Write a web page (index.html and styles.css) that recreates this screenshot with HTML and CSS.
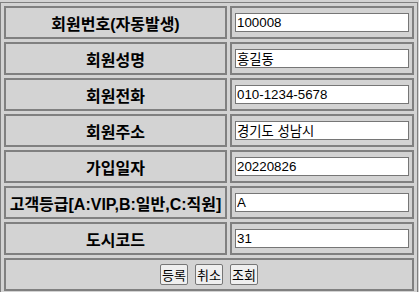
FILE: index.html
```html
<!DOCTYPE html>
<html lang="ko">
<head>
    <meta charset="UTF-8">
    <meta name="viewport" content="width=device-width, initial-scale=1.0">
    <title>회원등록</title>
    <link rel="stylesheet" href="styles.css">
</head>
<body>
    <form class="member-form">
        <table class="member-table">
            <tr>
                <th>회원번호(자동발생)</th>
                <td><input type="text" value="100008"></td>
            </tr>
            <tr>
                <th>회원성명</th>
                <td><input type="text" value="홍길동"></td>
            </tr>
            <tr>
                <th>회원전화</th>
                <td><input type="text" value="010-1234-5678"></td>
            </tr>
            <tr>
                <th>회원주소</th>
                <td><input type="text" value="경기도 성남시"></td>
            </tr>
            <tr>
                <th>가입일자</th>
                <td><input type="text" value="20220826"></td>
            </tr>
            <tr>
                <th>고객등급[A:VIP,B:일반,C:직원]</th>
                <td><input type="text" value="A"></td>
            </tr>
            <tr>
                <th>도시코드</th>
                <td><input type="text" value="31"></td>
            </tr>
            <tr>
                <td colspan="2" class="actions">
                    <div class="buttons">
                        <button type="submit">등록</button>
                        <button type="reset">취소</button>
                        <button type="button">조회</button>
                    </div>
                </td>
            </tr>
        </table>
    </form>
</body>
</html>
```

FILE: styles.css
```css
* {
    box-sizing: border-box;
}

body {
    margin: 0;
    background-color: #d3d3d3;
    font-family: 'Liberation Sans', 'Noto Sans CJK KR', sans-serif;
    color: #000;
}

.member-table {
    width: 418px;
    margin-top: 2px;
    border: 1px solid #808080;
    border-spacing: 3px;
    background-color: #d3d3d3;
}

.member-table th,
.member-table td {
    height: 33px;
    border: 2px solid #808080;
    padding: 0 3px;
}

.member-table th {
    width: 226px;
    font-size: 16px;
    font-weight: bold;
    text-align: center;
    white-space: nowrap;
}

.member-table input {
    display: block;
    width: 174px;
    height: 19px;
    margin: 0 auto;
    padding: 0 1px;
    border: 2px inset #767676;
    border-width: 1px;
    border-style: solid;
    background: #fff;
    font-family: 'Liberation Sans', 'Noto Sans CJK KR', sans-serif;
    font-size: 13.33px;
}

.buttons {
    display: flex;
    justify-content: center;
    gap: 7px;
}

.buttons button {
    height: 21px;
    padding: 0 1px;
    border: 1px solid #767676;
    border-radius: 2px;
    background-color: #efefef;
    font-family: 'Noto Sans CJK KR', sans-serif;
    font-size: 13px;
    line-height: 1;
    cursor: pointer;
}
```
